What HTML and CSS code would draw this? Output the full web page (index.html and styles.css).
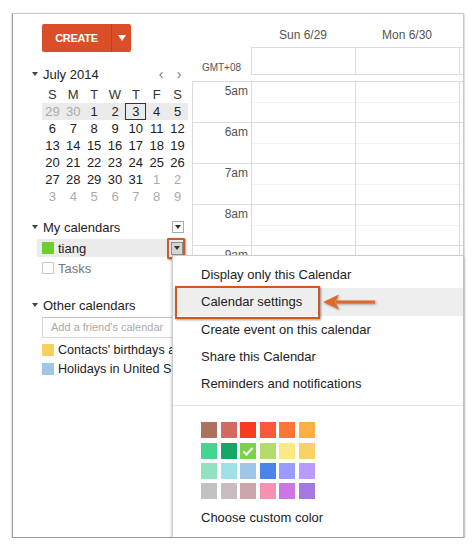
FILE: index.html
```html
<!DOCTYPE html>
<html>
<head>
<meta charset="utf-8">
<link rel="stylesheet" href="styles.css">
</head>
<body>
<div class="frame">
  <div class="sidebar">
    <div class="create">
      <div class="create-main">CREATE</div>
      <div class="create-arrow"><span class="tri-white"></span></div>
    </div>

    <div class="mini-head">
      <span class="caret"></span><span class="title">July 2014</span>
      <div class="nav"><span>‹</span><span>›</span></div>
    </div>
    <div class="mini-grid">
      <span class="dow">S</span><span class="dow">M</span><span class="dow">T</span><span class="dow">W</span><span class="dow">T</span><span class="dow">F</span><span class="dow">S</span>
      <span class="cur off">29</span><span class="cur off">30</span><span class="cur">1</span><span class="cur">2</span><span class="cur today">3</span><span class="cur">4</span><span class="cur">5</span>
      <span>6</span><span>7</span><span>8</span><span>9</span><span>10</span><span>11</span><span>12</span>
      <span>13</span><span>14</span><span>15</span><span>16</span><span>17</span><span>18</span><span>19</span>
      <span>20</span><span>21</span><span>22</span><span>23</span><span>24</span><span>25</span><span>26</span>
      <span>27</span><span>28</span><span>29</span><span>30</span><span>31</span><span class="off">1</span><span class="off">2</span>
      <span class="off">3</span><span class="off">4</span><span class="off">5</span><span class="off">6</span><span class="off">7</span><span class="off">8</span><span class="off">9</span>
    </div>

    <div class="sec-head mycal">
      <span class="caret"></span><span class="title">My calendars</span>
      <span class="dd"><span class="tri-dark"></span></span>
    </div>
    <div class="cal-row selected">
      <span class="swatch green"></span><span>tiang</span>
      <span class="dd dd-gray ringed"><span class="tri-dark"></span></span>
    </div>
    <div class="cal-row tasks">
      <span class="swatch box"></span><span class="muted">Tasks</span>
    </div>

    <div class="sec-head other">
      <span class="caret"></span><span class="title">Other calendars</span>
    </div>
    <div class="friend">Add a friend's calendar</div>
    <div class="cal-row clipped contacts">
      <span class="swatch yellow"></span><span class="nowrap">Contacts' birthdays a</span>
    </div>
    <div class="cal-row clipped holidays">
      <span class="swatch blue"></span><span class="nowrap">Holidays in United St</span>
    </div>
  </div>

  <div class="main">
    <div class="head-row">
      <div></div>
      <div class="dayname">Sun 6/29</div>
      <div class="dayname">Mon 6/30</div>
      <div></div>
    </div>
    <div class="allday-row">
      <div class="tz">GMT+08</div>
      <div class="allday-cell"></div>
      <div class="allday-cell"></div>
      <div class="allday-sb"></div>
    </div>
    <div class="grid">
      <div class="hour"><div class="label">5am</div><div class="cell"></div><div class="cell"></div><div class="sb"></div></div>
      <div class="hour"><div class="label">6am</div><div class="cell"></div><div class="cell"></div><div class="sb"></div></div>
      <div class="hour"><div class="label">7am</div><div class="cell"></div><div class="cell"></div><div class="sb"></div></div>
      <div class="hour"><div class="label">8am</div><div class="cell"></div><div class="cell"></div><div class="sb"></div></div>
      <div class="hour"><div class="label">9am</div><div class="cell"></div><div class="cell"></div><div class="sb"></div></div>
    </div>
  </div>

  <div class="menu">
    <div class="item">Display only this Calendar</div>
    <div class="item hl">Calendar settings
      <svg class="arrow" width="56" height="18" viewBox="0 0 56 18">
        <path d="M14 7.5 L53 7.5 L53 10.5 L14 10.5 Z" fill="#df6a2b"/>
        <path d="M1 9 L17 1.5 L13 9 L17 16.5 Z" fill="#df6a2b"/>
      </svg>
    </div>
    <div class="item">Create event on this calendar</div>
    <div class="item">Share this Calendar</div>
    <div class="item">Reminders and notifications</div>
    <div class="sep"></div>
    <div class="swatches">
      <span class="c" style="background:#ac725e"></span>
      <span class="c" style="background:#d06b64"></span>
      <span class="c" style="background:#f83a22"></span>
      <span class="c" style="background:#fa573c"></span>
      <span class="c" style="background:#ff7537"></span>
      <span class="c" style="background:#ffad46"></span>
      <span class="c" style="background:#42d692"></span>
      <span class="c" style="background:#16a765"></span>
      <span class="c" style="background:#7bd148"><svg width="16" height="16" viewBox="0 0 16 16"><path d="M3.5 8.5 L6.5 11.5 L12.5 5" fill="none" stroke="#fff" stroke-width="2"/></svg></span>
      <span class="c" style="background:#b3dc6c"></span>
      <span class="c" style="background:#fbe983"></span>
      <span class="c" style="background:#fad165"></span>
      <span class="c" style="background:#92e1c0"></span>
      <span class="c" style="background:#9fe1e7"></span>
      <span class="c" style="background:#9fc6e7"></span>
      <span class="c" style="background:#4986e7"></span>
      <span class="c" style="background:#9a9cff"></span>
      <span class="c" style="background:#b99aff"></span>
      <span class="c" style="background:#c2c2c2"></span>
      <span class="c" style="background:#cabdbf"></span>
      <span class="c" style="background:#cca6ac"></span>
      <span class="c" style="background:#f691b2"></span>
      <span class="c" style="background:#cd74e6"></span>
      <span class="c" style="background:#a47ae2"></span>
    </div>
    <div class="custom">Choose custom color</div>
  </div>
</div>
</body>
</html>
```

FILE: styles.css
```css
* { box-sizing: border-box; }
body {
  margin: 0;
  background: #fff;
  font-family: "Liberation Sans", Arial, sans-serif;
  font-size: 13px;
  color: #222;
}
.frame {
  position: relative;
  margin: 13px 0 0 12px;
  width: 452px;
  height: 525px;
  border: 1px solid #c8c8c8;
  border-left-color: #a0a0a0;
  border-bottom-color: #999;
  box-shadow: 0 1px 2px rgba(0,0,0,.35);
  display: flex;
}

/* sidebar */
.sidebar {
  width: 179px;
  flex: none;
  padding-top: 10px;
}
.create {
  display: flex;
  margin-left: 29px;
  width: 89px;
  height: 28px;
}
.create-main {
  width: 69px;
  background: #da4f28;
  color: #fff;
  font-weight: bold;
  font-size: 11px;
  letter-spacing: -0.3px;
  display: flex;
  align-items: center;
  justify-content: center;
  border-radius: 2px 0 0 2px;
}
.create-arrow {
  flex: 1;
  background: #da4f28;
  border-left: 1px solid #b9441f;
  border-radius: 0 2px 2px 0;
  display: flex;
  align-items: center;
  justify-content: center;
}
.tri-white {
  width: 0; height: 0;
  border-left: 4px solid transparent;
  border-right: 4px solid transparent;
  border-top: 6px solid #fff;
}
.caret {
  width: 0; height: 0;
  border-left: 3px solid transparent;
  border-right: 3px solid transparent;
  border-top: 4px solid #444;
  margin-right: 5px;
}
.mini-head {
  margin-top: 14px;
  height: 16px;
  display: flex;
  align-items: center;
  padding: 0 4px 0 19px;
}
.title { font-size: 13px; color: #222; }
.nav { margin-left: auto; display: flex; }
.nav span { width: 18px; text-align: center; color: #777; font-size: 14px; line-height: 16px; }
.mini-grid {
  margin: 4px 0 0 29px;
  width: 146px;
  display: grid;
  grid-template-columns: repeat(7, 1fr);
  grid-auto-rows: 17px;
  line-height: 17px;
  text-align: center;
  font-size: 13px;
}
.mini-grid .dow { color: #333; }
.mini-grid .cur { background: #ebebeb; }
.mini-grid .off { color: #aaa; }
.mini-grid .today { box-shadow: inset 0 0 0 1px #333; }

.sec-head {
  height: 16px;
  display: flex;
  align-items: center;
  padding: 0 8px 0 19px;
}
.sec-head.mycal { margin-top: 14px; }
.sec-head.other { margin-top: 20px; }
.dd {
  margin-left: auto;
  width: 12px;
  height: 12px;
  border: 1px solid #aaa;
  background: #fff;
  display: flex;
  align-items: center;
  justify-content: center;
}
.tri-dark {
  width: 0; height: 0;
  border-left: 3px solid transparent;
  border-right: 3px solid transparent;
  border-top: 4px solid #333;
}
.cal-row {
  margin: 0 8px 0 24px;
  height: 18px;
  display: flex;
  align-items: center;
  padding: 0 1px 0 5px;
}
.cal-row.clipped {
  margin-right: 19px;
  overflow: hidden;
  font-size: 12.6px;
}
.cal-row.selected { margin-top: 4px; background: #ebebeb; }
.cal-row.tasks { margin-top: 2px; }
.cal-row.contacts { margin-top: 3px; }
.cal-row.holidays { margin-top: 1px; }
.swatch {
  flex: none;
  width: 12px;
  height: 12px;
  margin-right: 4px;
}
.swatch.green { background: #6fcf2e; }
.swatch.box { background: #fff; border: 1px solid #ccc; }
.swatch.yellow { background: #fbcf5f; }
.swatch.blue { background: #9fc6e7; }
.muted { color: #777; }
.nowrap { white-space: nowrap; }
.dd-gray {
  height: 13px;
  background: #d6d6d6;
  border-color: #8a8a8a;
  position: relative;
}
.ringed::after {
  content: "";
  position: absolute;
  left: -5px; right: -3px; top: -5px; bottom: -5px;
  border: 2px solid #cf5c22;
  border-radius: 1px;
  box-shadow: 1px 1px 2px rgba(0,0,0,.4);
}
.friend {
  margin: 4px 0 0 29px;
  width: 130px;
  height: 21px;
  border: 1px solid #d9d9d9;
  border-top-color: #c4c4c4;
  border-right: none;
  padding-left: 8px;
  font-size: 11px;
  line-height: 19px;
  color: #aaa;
  white-space: nowrap;
}

/* main */
.main {
  flex: 1;
  overflow: hidden;
}
.head-row, .allday-row, .hour {
  display: grid;
  grid-template-columns: 59px 104px 104px 1fr;
}
.head-row { height: 33px; }
.dayname {
  align-self: end;
  text-align: center;
  font-size: 12px;
  line-height: 14px;
  padding-bottom: 5px;
  color: #555;
}
.allday-row { height: 28px; }
.tz {
  align-self: end;
  text-align: center;
  font-size: 10px;
  line-height: 12px;
  padding-bottom: 1px;
  color: #555;
}
.allday-cell {
  border: 1px solid #dcdcdc;
  border-right: none;
}
.allday-sb {
  border: 1px solid #dcdcdc;
  border-right: none;
}
.grid {
  margin-top: 6px;
  border-top: 1px solid #dcdcdc;
  border-left: 1px solid #dcdcdc;
  height: 500px;
}
.grid .hour {
  grid-template-columns: 58px 104px 104px 1fr;
  height: 41px;
  border-bottom: 1px solid #dcdcdc;
}
.label {
  text-align: right;
  padding: 2px 3px 0 0;
  font-size: 12px;
  line-height: 14px;
  color: #555;
}
.cell {
  position: relative;
  border-left: 1px solid #dcdcdc;
}
.cell::after {
  content: "";
  position: absolute;
  left: 0; right: 0; top: 20px;
  border-top: 1px dotted #e6e6e6;
}
.sb { border-left: 1px solid #dcdcdc; }

/* menu */
.menu {
  position: absolute;
  left: 159px;
  top: 241px;
  right: -1px;
  bottom: -1px;
  background: #fff;
  border: 1px solid #ccc;
  border-right-color: #c0c0c0;
  border-bottom-color: #999;
  box-shadow: 0 2px 3px rgba(0,0,0,.3);
  padding-top: 5px;
  z-index: 10;
}
.item {
  position: relative;
  height: 27.3px;
  line-height: 27px;
  padding-left: 28px;
  color: #222;
  white-space: nowrap;
}
.item.hl { background: #eee; }
.item.hl::after {
  content: "";
  position: absolute;
  left: 2px;
  top: -2px;
  width: 141px;
  height: 29px;
  border: 2px solid #cb5a22;
  box-shadow: 1px 1px 2px rgba(0,0,0,.4);
}
.arrow {
  position: absolute;
  left: 149px;
  top: 5px;
  filter: drop-shadow(1px 1px 1px rgba(0,0,0,.35));
}
.sep {
  margin-top: 8px;
  border-top: 1px solid #e5e5e5;
}
.swatches {
  margin: 16px 0 0 28px;
  display: grid;
  grid-template-columns: repeat(6, 16px);
  grid-auto-rows: 16px;
  column-gap: 3.5px;
  row-gap: 4.3px;
}
.c { display: block; width: 16px; height: 16px; }
.c svg { display: block; }
.custom {
  margin-top: 12px;
  padding-left: 28px;
  line-height: 14px;
  color: #222;
}
```
